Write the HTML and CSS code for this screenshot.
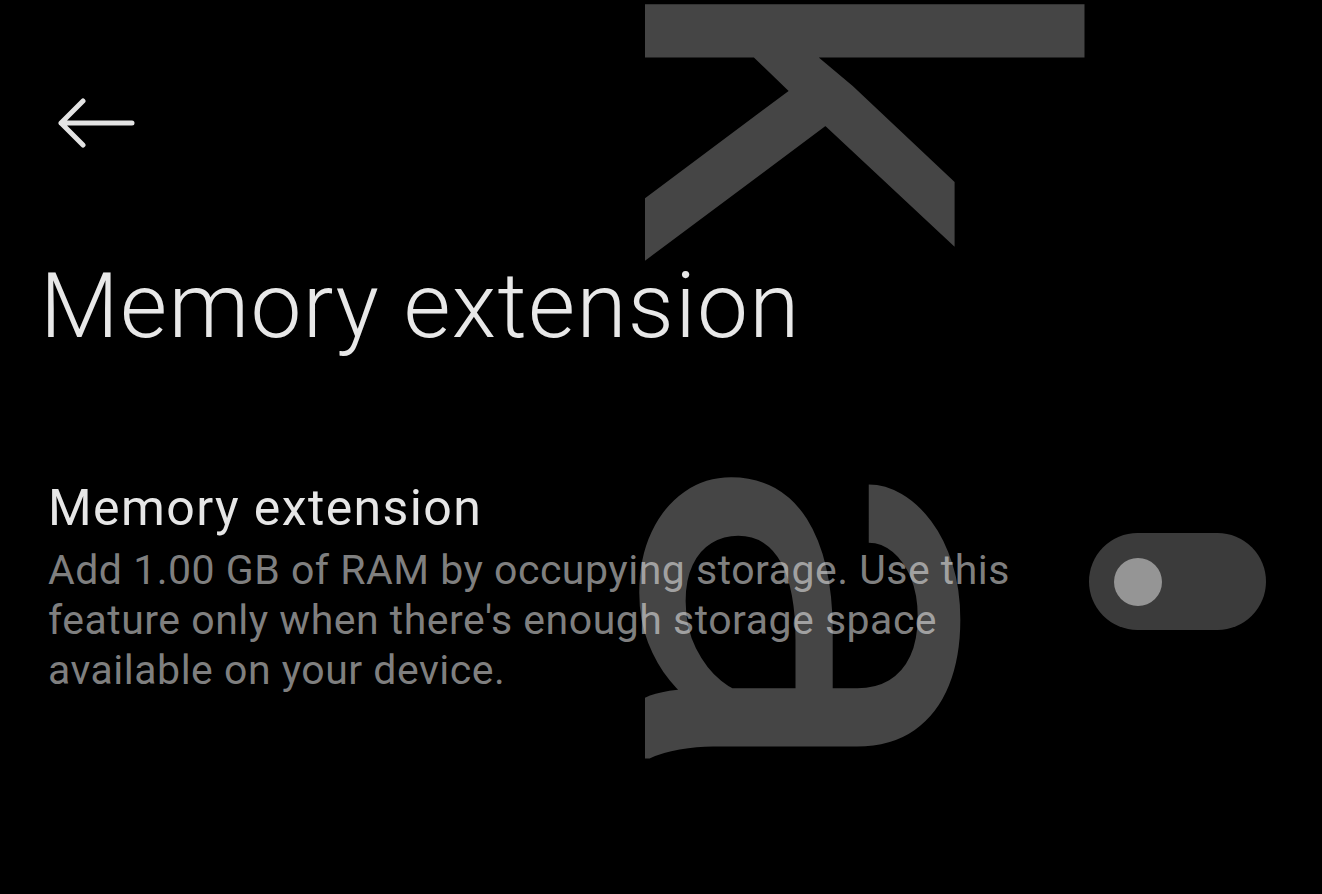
FILE: index.html
```html
<!DOCTYPE html>
<html lang="en">
<head>
    <meta charset="UTF-8">
    <meta name="viewport" content="width=device-width, initial-scale=1.0">
    <title>Memory extension</title>
    <link rel="stylesheet" href="styles.css">
</head>
<body>
    <div class="screen">
        <div class="toolbar">
            <button class="back" aria-label="Back">
                <svg width="80" height="56" viewBox="0 0 80 56">
                    <path d="M76 25 H5 M27 3 L5 25 L27 47" fill="none" stroke="#e4e4e4" stroke-width="5" stroke-linecap="round" stroke-linejoin="round"/>
                </svg>
            </button>
        </div>

        <h1 class="page-title">Memory extension</h1>

        <div class="setting">
            <div class="setting-text">
                <div class="setting-title">Memory extension</div>
                <div class="setting-desc">Add 1.00 GB of RAM by occupying storage. Use this feature only when there's enough storage space available on your device.</div>
            </div>
            <div class="switch">
                <span class="knob"></span>
            </div>
        </div>

        <!-- sideways watermark laid over the screen -->
        <div class="watermark">k<span class="wide">a</span></div>
    </div>
</body>
</html>
```

FILE: styles.css
```css
html, body {
    margin: 0;
    height: 100%;
}
body {
    background: #000;
    font-family: Roboto, "Liberation Sans", sans-serif;
    overflow: hidden;
}
.screen {
    position: relative;
    height: 100%;
    overflow: hidden;
}
.toolbar {
    padding: 98px 0 0 56px;
    height: 57px;
}
.back {
    background: none;
    border: none;
    padding: 0;
    cursor: pointer;
    display: block;
}
.back svg {
    display: block;
}
.page-title {
    margin: 96px 0 0 40px;
    font-size: 91px;
    line-height: 110px;
    font-weight: 300;
    letter-spacing: 1.3px;
    color: #e8e8e8;
}
.setting {
    display: flex;
    align-items: center;
    margin-top: 117px;
    padding: 0 56px 0 48px;
}
.setting-text {
    width: 1000px;
}
.setting-title {
    font-size: 50px;
    line-height: 60px;
    letter-spacing: 1.4px;
    color: #e6e6e6;
}
.setting-desc {
    margin-top: 7px;
    font-size: 41px;
    line-height: 50px;
    letter-spacing: 0.5px;
    color: #7f7f7f;
}
.switch {
    margin-left: auto;
    margin-top: -10px;
    width: 177px;
    height: 97px;
    border-radius: 49px;
    background: #3b3b3b;
    display: flex;
    align-items: center;
    padding-left: 25px;
    box-sizing: border-box;
}
.knob {
    width: 48px;
    height: 48px;
    border-radius: 50%;
    background: #959595;
}
.watermark {
    position: absolute;
    left: 552px;
    top: -36px;
    font-size: 586px;
    line-height: 1;
    writing-mode: vertical-rl;
    letter-spacing: 0.31em;
    color: rgba(255, 255, 255, 0.27);
    pointer-events: none;
    white-space: nowrap;
}
.watermark .wide {
    display: inline-block;
    transform: scaleY(1.1);
    transform-origin: top;
}
```
